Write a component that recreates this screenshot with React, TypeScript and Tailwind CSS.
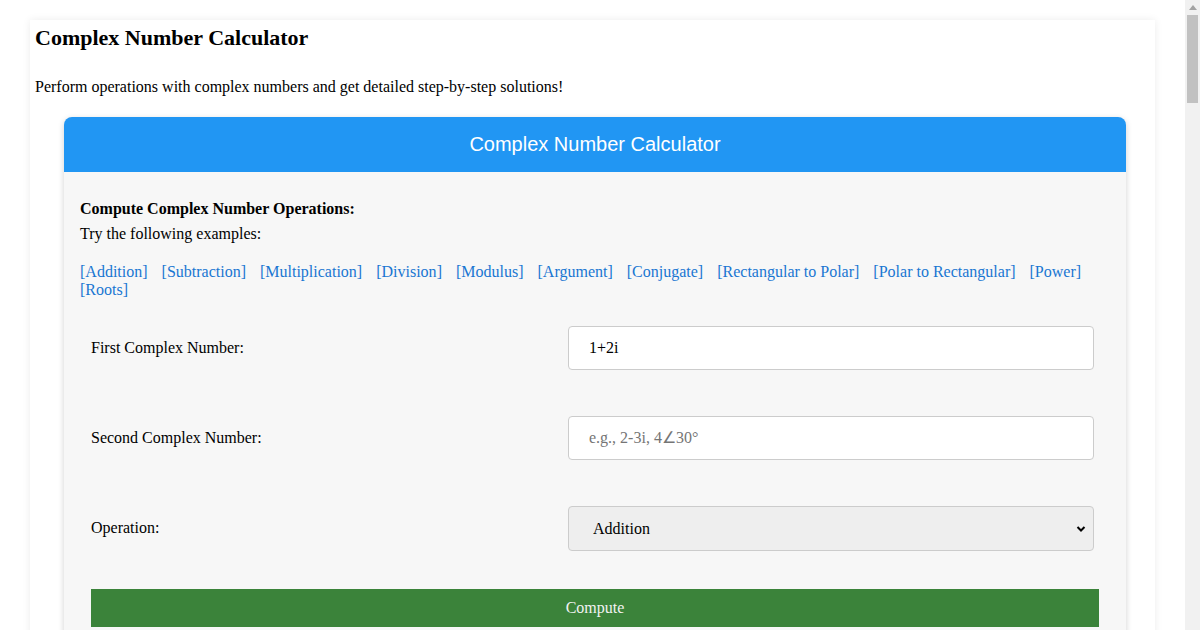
import React from "react";

const links = [
  "Addition",
  "Subtraction",
  "Multiplication",
  "Division",
  "Modulus",
  "Argument",
  "Conjugate",
  "Rectangular to Polar",
  "Polar to Rectangular",
  "Power",
  "Roots",
];

function Scrollbar() {
  return (
    <div className="flex h-[630px] w-[15px] shrink-0 flex-col items-center bg-[#f1f1f1]">
      <div className="flex h-[15px] w-full items-center justify-center">
        <svg width="8" height="5" viewBox="0 0 8 5">
          <path d="M0 5 L4 0 L8 5 Z" fill="#a3a3a3" />
        </svg>
      </div>
      <div className="h-[88px] w-[11px] bg-[#c1c1c1]" />
    </div>
  );
}

export default function App() {
  return (
    <div className="flex h-[630px] overflow-hidden bg-white font-['Liberation_Serif',serif] text-[16px] text-black">
      <div className="min-w-0 flex-1 overflow-hidden">
        <div className="mx-[30px] mt-[20px] bg-white p-[5px] pb-[40px] shadow-[0_0_8px_rgba(0,0,0,0.08)]">
          <h2 className="m-0 text-[22px] font-bold leading-[26px]">Complex Number Calculator</h2>
          <p className="mt-[27px] leading-[18px]">
            Perform operations with complex numbers and get detailed step-by-step solutions!
          </p>
          <div className="ml-[29px] mt-[21px] w-[1062px] overflow-hidden rounded-[8px] bg-[#f7f7f7] shadow-[0_2px_6px_rgba(0,0,0,0.18)]">
            <div className="flex h-[55px] items-center justify-center bg-[#2196f3] pb-[1px] font-['Liberation_Sans',sans-serif] text-[20px] text-white">
              Complex Number Calculator
            </div>
            <div className="px-[16px] pb-[60px] pt-[28px]">
              <div className="font-bold leading-[18px]">Compute Complex Number Operations:</div>
              <div className="mt-[7px] leading-[18px]">Try the following examples:</div>
              <div className="mt-[20px] leading-[18px]">
                {links.map((l) => (
                  <React.Fragment key={l}>
                    <a href="#" className="mr-[10px] text-[#1976d2]">
                      [{l}]
                    </a>{" "}
                  </React.Fragment>
                ))}
              </div>
              <div className="mt-[4px] px-[11px]">
                <div className="grid h-[90px] grid-cols-[477px_1fr] items-center">
                  <label>First Complex Number:</label>
                  <input
                    defaultValue="1+2i"
                    className="mr-[5px] h-[44px] rounded-[4px] border border-[#cccccc] bg-white px-[20px] text-[16px] outline-none"
                  />
                </div>
                <div className="grid h-[90px] grid-cols-[477px_1fr] items-center">
                  <label>Second Complex Number:</label>
                  <input
                    placeholder="e.g., 2-3i, 4∠30°"
                    className="mr-[5px] h-[44px] rounded-[4px] border border-[#cccccc] bg-white px-[20px] text-[16px] outline-none placeholder:text-[#757575]"
                  />
                </div>
                <div className="grid h-[90px] grid-cols-[477px_1fr] items-center">
                  <label>Operation:</label>
                  <div className="relative mr-[5px]">
                    <select className="h-[45px] w-full appearance-none rounded-[4px] border border-[#cccccc] bg-[#eeeeee] pl-[24px] pt-[1px] text-[16px] outline-none">
                      <option>Addition</option>
                      <option>Subtraction</option>
                    </select>
                    <svg
                      className="pointer-events-none absolute right-[8px] top-[18px]"
                      width="10"
                      height="10"
                      viewBox="0 0 10 10"
                    >
                      <path d="M1.5 3 L5 6.5 L8.5 3" fill="none" stroke="#000" strokeWidth="2" />
                    </svg>
                  </div>
                </div>
                <button className="mt-[16px] flex h-[38px] w-full items-center justify-center bg-[#3b833a] text-[16px] text-[#f2f2f2]">
                  Compute
                </button>
              </div>
            </div>
          </div>
        </div>
      </div>
      <Scrollbar />
    </div>
  );
}
